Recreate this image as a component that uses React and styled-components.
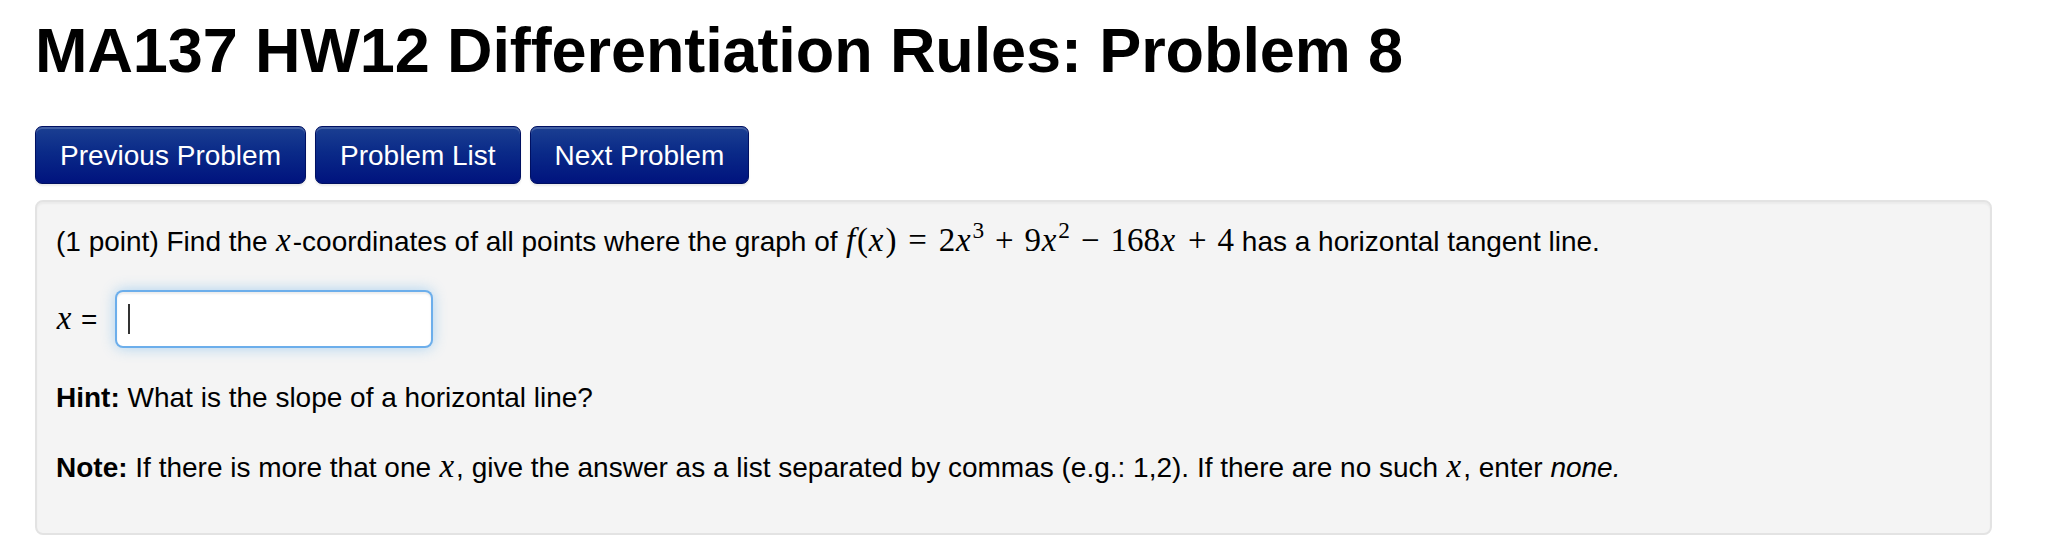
import React from 'react'
import styled, { createGlobalStyle } from 'styled-components'

const GlobalStyle = createGlobalStyle`
    html, body {
        margin:0;
        padding:0;
        background:#ffffff;
    }
    body {
        font-family:"Liberation Sans", Arial, Helvetica, sans-serif;
        color:#000;
    }
`

const App = () => {
    return (
        <>
            <GlobalStyle />
            <Page>
                <Title>MA137 HW12 Differentiation Rules: Problem 8</Title>
                <NavBar>
                    <NavButton type='button'>Previous Problem</NavButton>
                    <NavButton type='button'>Problem List</NavButton>
                    <NavButton type='button'>Next Problem</NavButton>
                </NavBar>
                <ProblemWell>
                    <Para>
                        (1 point) Find the <MathVar>x</MathVar>-coordinates of all points where the graph of{' '}
                        <Formula>
                            <MathVar>f</MathVar>
                            <MathNum>(</MathNum>
                            <MathVar>x</MathVar>
                            <MathNum>)</MathNum>
                            <MathOp wide>=</MathOp>
                            <MathNum>2</MathNum>
                            <MathVar>x</MathVar>
                            <Sup>3</Sup>
                            <MathOp>+</MathOp>
                            <MathNum>9</MathNum>
                            <MathVar>x</MathVar>
                            <Sup>2</Sup>
                            <MathOp>−</MathOp>
                            <MathNum>168</MathNum>
                            <MathVar>x</MathVar>
                            <MathOp>+</MathOp>
                            <MathNum>4</MathNum>
                        </Formula>{' '}
                        has a horizontal tangent line.
                    </Para>
                    <AnswerRow>
                        <AnswerLabel>
                            <MathVar>x</MathVar> =
                        </AnswerLabel>
                        <AnswerField>
                            <AnswerInput type='text' aria-label='answer' />
                            <Caret />
                        </AnswerField>
                    </AnswerRow>
                    <Para>
                        <b>Hint:</b> What is the slope of a horizontal line?
                    </Para>
                    <Para>
                        <b>Note:</b> If there is more that one <MathVar>x</MathVar>, give the answer as a list separated by commas (e.g.: 1,2). If there are no such <MathVar>x</MathVar>, enter <i>none.</i>
                    </Para>
                </ProblemWell>
            </Page>
        </>
    )
}

export default App

const Page = styled.div`
    padding:15px 0 0 35px;
    width:1957px;
`

const Title = styled.h1`
    margin:0;
    font-size:63px;
    line-height:70px;
    font-weight:bold;
    letter-spacing:-0.1px;
    color:#000;
`

const NavBar = styled.div`
    display:flex;
    gap:9px;
    margin-top:41px;
`

const NavButton = styled.button`
    font-family:"Liberation Sans", Arial, sans-serif;
    font-size:28px;
    line-height:38px;
    color:#fff;
    padding:10px 24px 8px 24px;
    border:1px solid #001062;
    border-radius:7px;
    background-image:linear-gradient(to bottom, #1b3f92 0%, #0a2a88 45%, #00137e 100%);
    box-shadow:inset 0 2px 0 rgba(255,255,255,0.18), 0 2px 2px rgba(0,0,0,0.08);
    cursor:pointer;
`

const ProblemWell = styled.div`
    margin-top:16px;
    background:#f4f4f4;
    border:2px solid #e3e3e3;
    border-radius:8px;
    box-shadow:inset 0 2px 2px rgba(0,0,0,0.04);
    padding:18px 19px 17px 19px;
`

const Para = styled.p`
    margin:0 0 28px 0;
    font-size:28px;
    line-height:40px;
    color:#000;
`

const Formula = styled.span`
    font-family:"Liberation Serif", "Times New Roman", serif;
    font-size:33px;
    white-space:nowrap;
`

const MathVar = styled.span`
    font-family:"Liberation Serif", "Times New Roman", serif;
    font-style:italic;
    font-size:33px;
    padding:0 0.06em 0 0.02em;
`

const MathNum = styled.span`
    font-style:normal;
`

const MathOp = styled.span`
    margin:0 ${p => p.wide ? '0.36em' : '0.33em'};
`

const Sup = styled.span`
    font-size:0.707em;
    vertical-align:0.55em;
    line-height:0;
`

const AnswerRow = styled.div`
    display:flex;
    align-items:center;
    gap:18px;
    margin:0 0 30px 0;
    height:58px;
`

const AnswerLabel = styled.span`
    font-size:28px;
    line-height:40px;
`

const AnswerField = styled.span`
    position:relative;
    display:inline-block;
`

const AnswerInput = styled.input`
    box-sizing:border-box;
    width:318px;
    height:58px;
    background:#fff;
    border:2px solid rgba(82,160,232,0.85);
    border-radius:8px;
    box-shadow:inset 0 2px 2px rgba(0,0,0,0.075), 0 0 14px rgba(82,168,236,0.45);
    padding:0 12px;
    font-size:28px;
    font-family:"Liberation Sans", Arial, sans-serif;
    outline:none;
`

const Caret = styled.span`
    position:absolute;
    left:13px;
    top:14px;
    width:2px;
    height:30px;
    background:#333;
`
